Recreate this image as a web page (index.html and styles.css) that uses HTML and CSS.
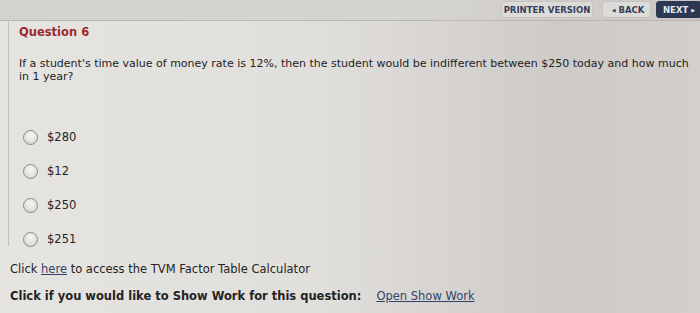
FILE: index.html
```html
<!DOCTYPE html>
<html>
<head>
    <meta charset="UTF-8">
    <title>Question 6</title>
    <link rel="stylesheet" href="styles.css">
</head>
<body>
    <div class="topbar">
        <a href="#" class="tb-button printer">PRINTER VERSION</a>
        <a href="#" class="tb-button back"><span class="arrow">&#9664;</span>BACK</a>
        <a href="#" class="tb-button next">NEXT<span class="arrow">&#9654;</span></a>
    </div>

    <div class="panel">
        <div class="q-title">Question 6</div>
        <p class="q-text">If a student's time value of money rate is 12%, then the student would be indifferent between $250 today and how much in 1 year?</p>

        <div class="options">
            <label class="option"><span class="radio"></span>$280</label>
            <label class="option"><span class="radio"></span>$12</label>
            <label class="option"><span class="radio"></span>$250</label>
            <label class="option"><span class="radio"></span>$251</label>
        </div>
    </div>

    <div class="footer">
        <p class="calc-line">Click <a href="#">here</a> to access the TVM Factor Table Calculator</p>
        <p class="work-line"><b>Click if you would like to Show Work for this question:</b><a href="#" class="work-link">Open Show Work</a></p>
    </div>
</body>
</html>
```

FILE: styles.css
```css
:root {
    --navy: #2b3753;
    --ink: #232323;
    --red: #9c2a2b;
}
body {
    margin: 0;
    font-family: 'DejaVu Sans', Verdana, sans-serif;
    color: var(--ink);
    background: linear-gradient(90deg, #e6e4e1 0%, #e1dfdc 45%, #cdcac8 80%, #d2cfcc 100%);
    height: 313px;
    overflow: hidden;
}
.topbar {
    display: flex;
    justify-content: flex-end;
    align-items: flex-start;
    height: 19px;
    padding-top: 1px;
    border-bottom: 1px solid #b8b6b3;
    background: linear-gradient(90deg, #d4d2cf 0%, #d6d4d1 60%, #c9c6c3 100%);
}
.tb-button {
    display: flex;
    align-items: center;
    justify-content: center;
    box-sizing: border-box;
    height: 17px;
    border: 1px solid #c6c4c1;
    border-radius: 3px;
    background: #dddbd8;
    color: #34405c;
    font-size: 8.5px;
    font-weight: bold;
    text-decoration: none;
}
.tb-button.printer {
    width: 92px;
    margin-right: 9px;
}
.tb-button.back {
    width: 49px;
    margin-right: 5px;
}
.tb-button .arrow {
    font-size: 5px;
    margin: 0 3px;
}
.tb-button.next {
    width: 44px;
    justify-content: flex-start;
    padding-left: 6px;
    background: var(--navy);
    border-color: var(--navy);
    color: #e8eaf0;
    border-radius: 3px 0 0 3px;
}
.panel {
    margin-left: 8px;
    padding: 4px 4px 0 10px;
    border-left: 1px solid #c2c0bd;
}
.q-title {
    color: var(--red);
    font-size: 11.5px;
    font-weight: bold;
    line-height: 14px;
}
.q-text {
    margin: 18px 0 0 0;
    font-size: 11px;
    line-height: 13px;
}
.options {
    display: flex;
    flex-direction: column;
    gap: 20px;
    padding: 47px 0 0 4px;
}
.option {
    display: flex;
    align-items: center;
    gap: 9px;
    height: 14px;
    font-size: 11.5px;
}
.radio {
    width: 13px;
    height: 13px;
    border-radius: 50%;
    border: 1px solid #8a8987;
    background: radial-gradient(circle at 50% 35%, #f6f5f3 0%, #e2e1df 60%, #c6c5c3 100%);
}
.footer {
    padding: 16px 0 0 10px;
    font-size: 11.5px;
}
.footer p {
    margin: 0;
    line-height: 14px;
}
.footer a {
    color: #34426a;
}
.work-line {
    margin-top: 13px !important;
}
.work-link {
    margin-left: 15px;
    font-weight: normal;
}
```
